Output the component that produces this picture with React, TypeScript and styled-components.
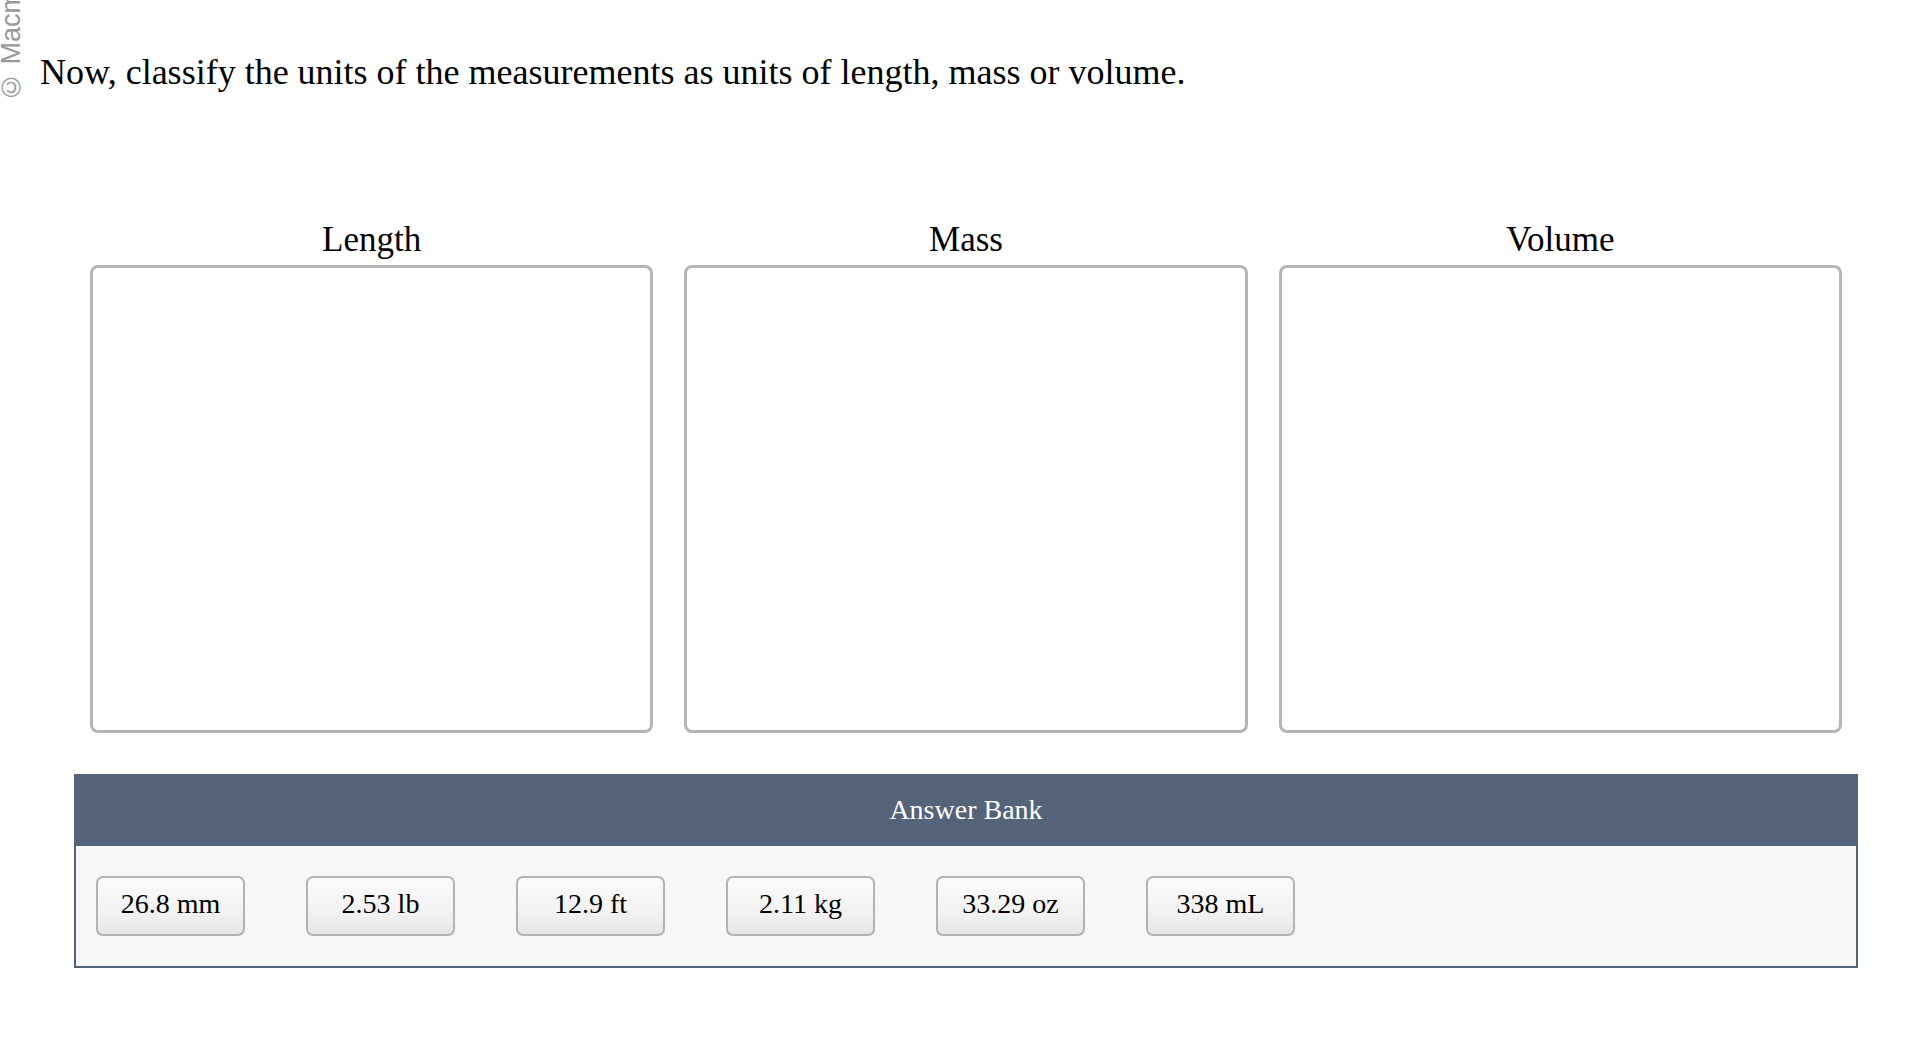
import styled, { createGlobalStyle } from 'styled-components'

const GlobalStyle = createGlobalStyle`
	body {
		margin: 0;
		background: #ffffff;
		color: #000000;
		font-family: "Liberation Serif", "Times New Roman", serif;
	}
`

const categories = ['Length', 'Mass', 'Volume']
const answers = ['26.8 mm', '2.53 lb', '12.9 ft', '2.11 kg', '33.29 oz', '338 mL']

const App = () => {
	return (
		<Page>
			<GlobalStyle />
			<Watermark>© Macmillan Learning</Watermark>
			<Prompt>Now, classify the units of the measurements as units of length, mass or volume.</Prompt>
			<Activity>
				<Bins>
					{categories.map((name) => (
						<Bin key={name}>
							<BinTitle>{name}</BinTitle>
							<DropZone />
						</Bin>
					))}
				</Bins>
				<Bank>
					<BankHeader>Answer Bank</BankHeader>
					<BankBody>
						{answers.map((a) => (
							<Chip key={a} type="button">{a}</Chip>
						))}
					</BankBody>
				</Bank>
			</Activity>
		</Page>
	)
}

export default App

const Page = styled.div`
	position: relative;
	padding: 52px 0 0 40px;
	min-height: 1004px;
`

// rotated copyright notice running up the left edge, scrolled partly out of view
const Watermark = styled.div`
	position: absolute;
	top: 102px;
	left: -2px;
	writing-mode: vertical-rl;
	transform: translateY(-100%) rotate(180deg);
	font-family: "Liberation Sans", Arial, sans-serif;
	font-size: 27px;
	line-height: 27px;
	color: #999999;
	white-space: nowrap;
`

const Prompt = styled.p`
	margin: 0;
	font-size: 36px;
	line-height: 40px;
`

const Activity = styled.div`
	width: 1784px;
	margin: 128px 0 0 34px;
`

const Bins = styled.div`
	display: grid;
	grid-template-columns: repeat(3, 1fr);
	column-gap: 31px;
	padding: 0 16px;
`

const Bin = styled.div`
	display: flex;
	flex-direction: column;
`

const BinTitle = styled.div`
	font-size: 35px;
	line-height: 40px;
	text-align: center;
	margin-bottom: 5px;
`

const DropZone = styled.div`
	height: 468px;
	box-sizing: border-box;
	border: 3px solid #b5b5b5;
	border-radius: 8px;
	background: #ffffff;
`

const Bank = styled.div`
	margin-top: 41px;
	border: 2px solid #54637a;
`

const BankHeader = styled.div`
	height: 70px;
	padding-bottom: 2px;
	box-sizing: border-box;
	display: flex;
	align-items: center;
	justify-content: center;
	background: #54637a;
	color: #ffffff;
	font-size: 28px;
`

const BankBody = styled.div`
	display: flex;
	flex-wrap: wrap;
	gap: 61px;
	padding: 30px 20px;
	background: #f7f7f7;
`

const Chip = styled.button`
	width: 149px;
	height: 60px;
	box-sizing: border-box;
	border: 2px solid #b3b3b3;
	border-radius: 7px;
	background: linear-gradient(to bottom, #fbfbfb 0%, #f2f2f2 60%, #e6e6e6 100%);
	font-family: "Liberation Serif", "Times New Roman", serif;
	font-size: 28px;
	color: #000000;
	padding: 0 0 4px;
	cursor: pointer;
`
